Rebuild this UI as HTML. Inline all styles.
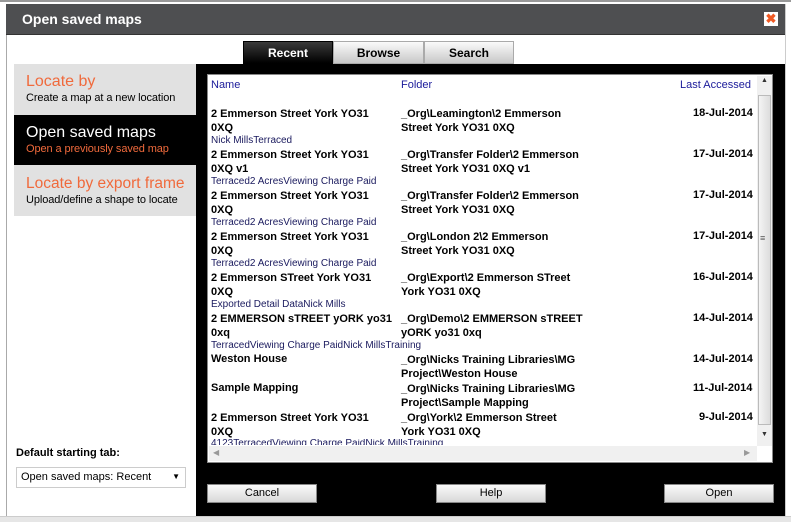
<!DOCTYPE html>
<html><head><style>
*{margin:0;padding:0;box-sizing:border-box}
body{width:791px;height:522px;background:#fff;position:relative;overflow:hidden;font-family:"Liberation Sans",Tahoma,sans-serif}
.a{position:absolute;white-space:nowrap}
.b{font-weight:bold;font-size:11px;color:#000}
.s{font-size:10px;color:#1a1a5e}
.h{font-size:11px;color:#1a1a9a}
.tab{position:absolute;top:41px;height:23px;font-size:12px;font-weight:bold;text-align:center;line-height:22px}
.btn{position:absolute;top:484px;width:110px;height:19px;background:linear-gradient(#fafafa,#d8d8d8);border:1px solid #888;font-size:11px;text-align:center;line-height:17px}
</style></head><body>
<div class="a" style="left:0;top:0;width:791px;height:2px;background:#999"></div>
<div class="a" style="left:6px;top:4px;width:780px;height:512px;border-left:1px solid #aaa;border-right:1px solid #ccc;background:#fff"></div>
<div class="a" style="left:6px;top:4px;width:779px;height:31px;background:#4e4f51;border-bottom:1px solid #333"></div>
<div class="a" style="left:22px;top:11px;color:#fff;font-weight:bold;font-size:14px">Open saved maps</div>
<div class="a" style="left:764px;top:12px;width:14px;height:14px;background:#fff;color:#f05a24;font-weight:bold;font-size:13px;line-height:14px;text-align:center">✖</div>

<div class="tab" style="left:243px;width:90px;background:linear-gradient(#3a3a3a,#000);color:#fff;border:1px solid #000">Recent</div>
<div class="tab" style="left:333px;width:91px;background:linear-gradient(#fafafa,#c8c8c8);border:1px solid #aaa">Browse</div>
<div class="tab" style="left:424px;width:90px;background:linear-gradient(#fafafa,#c8c8c8);border:1px solid #aaa">Search</div>

<div class="a" style="left:14px;top:64px;width:182px;height:51px;background:#e1e1e1"></div>
<div class="a" style="left:26px;top:73px;font-size:16px;color:#f06a3c">Locate by</div>
<div class="a" style="left:26px;top:92px;font-size:11px;color:#000;letter-spacing:-0.1px">Create a map at a new location</div>
<div class="a" style="left:14px;top:115px;width:182px;height:50px;background:#000"></div>
<div class="a" style="left:26px;top:124px;font-size:16px;color:#fff">Open saved maps</div>
<div class="a" style="left:26px;top:143px;font-size:11px;color:#f06a3c;letter-spacing:-0.1px">Open a previously saved map</div>
<div class="a" style="left:14px;top:165px;width:182px;height:51px;background:#e1e1e1"></div>
<div class="a" style="left:26px;top:175px;font-size:15.5px;color:#f06a3c">Locate by export frame</div>
<div class="a" style="left:26px;top:194px;font-size:11px;color:#000;letter-spacing:-0.1px">Upload/define a shape to locate</div>

<div class="a" style="left:16px;top:447px;font-size:11px;font-weight:bold">Default starting tab:</div>
<div class="a" style="left:16px;top:467px;width:170px;height:21px;border:1px solid #ccc;font-size:11px;padding:3px 4px">Open saved maps: Recent<span style="position:absolute;right:5px;top:4px;font-size:8px">▼</span></div>

<div class="a" style="left:196px;top:64px;width:589px;height:452px;background:#000"></div>
<div class="a" style="left:207px;top:74px;width:566px;height:389px;background:#fff;border:1px solid #888;overflow:hidden">
<div class="a" style="left:549px;top:1px;width:15px;height:370px;background:#f0f0f0"></div>
<div class="a" style="left:550px;top:20px;width:13px;height:330px;background:linear-gradient(90deg,#f4f4f4,#ddd);border:1px solid #bbb"></div>
<div class="a" style="left:553px;top:2px;font-size:7px;color:#333">▲</div>
<div class="a" style="left:553px;top:356px;font-size:7px;color:#333">▼</div>
<div class="a" style="left:552px;top:158px;font-size:9px;color:#555">≡</div>
<div class="a" style="left:1px;top:371px;width:548px;height:15px;background:#f0f0f0"></div>
<div class="a" style="left:5px;top:373px;font-size:8px;color:#999">◀</div>
<div class="a" style="left:536px;top:373px;font-size:8px;color:#999">▶</div>
</div>
<div class="a h" style="left:211px;top:79px">Name</div>
<div class="a h" style="left:401px;top:79px">Folder</div>
<div class="a h" style="left:680px;top:79px">Last Accessed</div>

<div class="a b" style="left:211px;top:107px;line-height:14px">2 Emmerson Street York YO31<br>0XQ</div>
<div class="a b" style="left:401px;top:107px;line-height:14px">_Org\Leamington\2 Emmerson<br>Street York YO31 0XQ</div>
<div class="a b" style="left:693px;top:107px">18-Jul-2014</div>
<div class="a s" style="left:211px;top:135px">Nick MillsTerraced</div>

<div class="a b" style="left:211px;top:148px;line-height:14px">2 Emmerson Street York YO31<br>0XQ v1</div>
<div class="a b" style="left:401px;top:148px;line-height:14px">_Org\Transfer Folder\2 Emmerson<br>Street York YO31 0XQ v1</div>
<div class="a b" style="left:693px;top:148px">17-Jul-2014</div>
<div class="a s" style="left:211px;top:176px">Terraced2 AcresViewing Charge Paid</div>

<div class="a b" style="left:211px;top:189px;line-height:14px">2 Emmerson Street York YO31<br>0XQ</div>
<div class="a b" style="left:401px;top:189px;line-height:14px">_Org\Transfer Folder\2 Emmerson<br>Street York YO31 0XQ</div>
<div class="a b" style="left:693px;top:189px">17-Jul-2014</div>
<div class="a s" style="left:211px;top:217px">Terraced2 AcresViewing Charge Paid</div>

<div class="a b" style="left:211px;top:230px;line-height:14px">2 Emmerson Street York YO31<br>0XQ</div>
<div class="a b" style="left:401px;top:230px;line-height:14px">_Org\London 2\2 Emmerson<br>Street York YO31 0XQ</div>
<div class="a b" style="left:693px;top:230px">17-Jul-2014</div>
<div class="a s" style="left:211px;top:258px">Terraced2 AcresViewing Charge Paid</div>

<div class="a b" style="left:211px;top:271px;line-height:14px">2 Emmerson STreet York YO31<br>0XQ</div>
<div class="a b" style="left:401px;top:271px;line-height:14px">_Org\Export\2 Emmerson STreet<br>York YO31 0XQ</div>
<div class="a b" style="left:693px;top:271px">16-Jul-2014</div>
<div class="a s" style="left:211px;top:299px">Exported Detail DataNick Mills</div>

<div class="a b" style="left:211px;top:312px;line-height:14px">2 EMMERSON sTREET yORK yo31<br>0xq</div>
<div class="a b" style="left:401px;top:312px;line-height:14px">_Org\Demo\2 EMMERSON sTREET<br>yORK yo31 0xq</div>
<div class="a b" style="left:693px;top:312px">14-Jul-2014</div>
<div class="a s" style="left:211px;top:340px">TerracedViewing Charge PaidNick MillsTraining</div>

<div class="a b" style="left:211px;top:353px">Weston House</div>
<div class="a b" style="left:401px;top:353px;line-height:14px">_Org\Nicks Training Libraries\MG<br>Project\Weston House</div>
<div class="a b" style="left:693px;top:353px">14-Jul-2014</div>

<div class="a b" style="left:211px;top:382px">Sample Mapping</div>
<div class="a b" style="left:401px;top:382px;line-height:14px">_Org\Nicks Training Libraries\MG<br>Project\Sample Mapping</div>
<div class="a b" style="left:693px;top:382px">11-Jul-2014</div>

<div class="a b" style="left:211px;top:411px;line-height:14px">2 Emmerson Street York YO31<br>0XQ</div>
<div class="a b" style="left:401px;top:411px;line-height:14px">_Org\York\2 Emmerson Street<br>York YO31 0XQ</div>
<div class="a b" style="left:699px;top:411px">9-Jul-2014</div>
<div class="a" style="left:208px;top:439px;width:548px;height:6px;overflow:hidden"><div class="s" style="position:absolute;left:3px;top:-1px">4123TerracedViewing Charge PaidNick MillsTraining</div></div>

<div class="btn" style="left:207px">Cancel</div>
<div class="btn" style="left:436px">Help</div>
<div class="btn" style="left:664px">Open</div>
<div class="a" style="left:0;top:516px;width:791px;height:6px;background:#e6e6e6;border-top:1px solid #ccc"></div>
</body></html>
